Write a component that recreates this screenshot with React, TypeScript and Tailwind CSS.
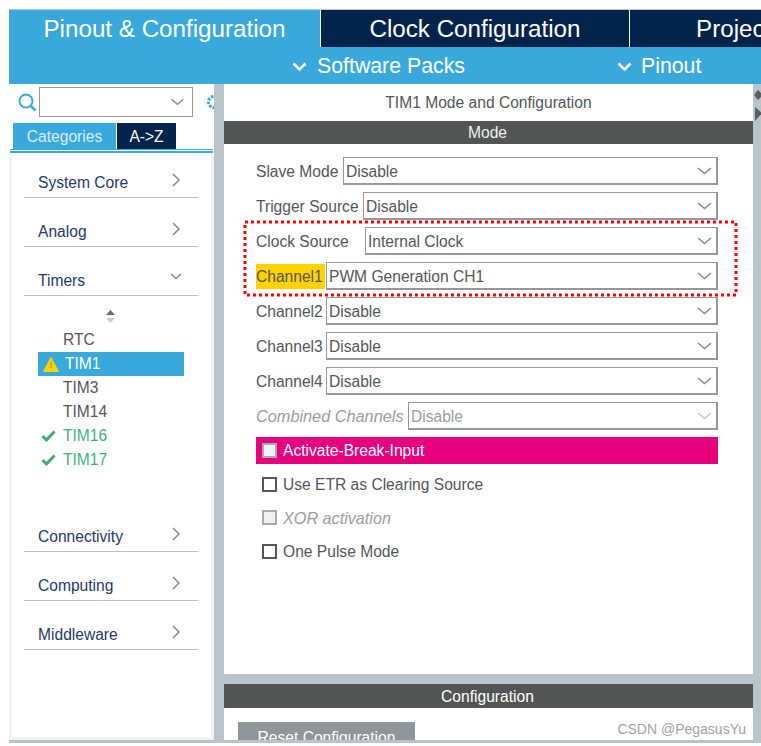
const font = "font-['Liberation_Sans',Arial,sans-serif]"

function Chevron({ className = '', light }: { className?: string; light?: boolean }) {
  return (
    <svg className={className} width="15" height="8" viewBox="0 0 15 8" fill="none">
      <path d="M1 1 L7.5 6.5 L14 1" stroke={light ? '#c2c5c7' : '#8b8e91'} strokeWidth="1.6" />
    </svg>
  )
}

function SideItem({ label, open, mt }: { label: string; open?: boolean; mt: string }) {
  return (
    <div className={`${mt} ml-[12px] mr-[13px] h-[28px] flex items-center justify-between border-b border-[#b4bfc7] pl-[14px] pr-[18px] pb-[2px] text-[15.6px] text-[#27386b]`}>
      <span>{label}</span>
      {open ? (
        <svg className="mb-[8px] -mr-[2px]" width="12" height="7" viewBox="0 0 12 7" fill="none">
          <path d="M1 1 L6 5.5 L11 1" stroke="#85888b" strokeWidth="1.5" />
        </svg>
      ) : (
        <svg className="mb-[6px]" width="8" height="14" viewBox="0 0 8 14" fill="none">
          <path d="M1 1 L7 7 L1 13" stroke="#85888b" strokeWidth="1.5" />
        </svg>
      )}
    </div>
  )
}

function Peripheral({ label, state }: { label: string; state?: 'warn' | 'ok' }) {
  const active = state === 'warn'
  return (
    <div className={`h-[24px] flex items-center text-[15.6px] ${active ? 'bg-[#39a9dc] text-white' : state === 'ok' ? 'text-[#43b07c]' : 'text-[#54565a]'}`}>
      <div className="w-[25px] flex justify-center shrink-0">
        {active && (
          <svg width="16" height="15" viewBox="0 0 16 15">
            <path d="M8 0.5 L15.5 14.5 L0.5 14.5 Z" fill="#ffd200" stroke="#ffd200" strokeLinejoin="round" />
            <rect x="7.2" y="4.5" width="1.6" height="7" fill="#c9a63a" />
          </svg>
        )}
        {state === 'ok' && (
          <svg className="mr-[5px]" width="15" height="12" viewBox="0 0 15 12" fill="none">
            <path d="M1.5 6 L5.5 10 L13.5 1.5" stroke="#3fa874" strokeWidth="3" />
          </svg>
        )}
      </div>
      <span className={active ? 'ml-[2px]' : ''}>{label}</span>
    </div>
  )
}

function Select({ value, disabled }: { value: string; disabled?: boolean }) {
  return (
    <div className={`flex-1 h-[28px] flex items-center justify-between border border-[#96999c] border-b-2 border-r-2 pl-[2px] pr-[4px] bg-white ${disabled ? 'text-[#9a9da0]' : ''}`}>
      <span className="pt-[2px]">{value}</span>
      <Chevron light={disabled} />
    </div>
  )
}

function FormRow({ label, value, width, highlight, disabled }: { label: string; value: string; width: string; highlight?: boolean; disabled?: boolean }) {
  return (
    <div className="h-[28px] flex items-center">
      <div className={`${width} shrink-0 whitespace-pre`}>
        <div className={`${highlight ? 'bg-[#ffd200] h-[25px] w-[69px] pt-[1px] flex items-center' : 'pt-[1px]'} ${disabled ? 'italic text-[16.3px] text-[#9a9da0]' : ''}`}>
          {label}
        </div>
      </div>
      <Select value={value} disabled={disabled} />
    </div>
  )
}

function Check({ label, muted, pink }: { label: string; muted?: boolean; pink?: boolean }) {
  return (
    <div className={`flex items-center pl-[6px] h-[27px] ${pink ? 'bg-[#e6007e] text-white' : ''} ${muted ? 'italic text-[16.2px] text-[#9a9da0]' : ''}`}>
      <span className={`w-[15px] h-[15px] border-2 mr-[6px] ${pink || muted ? 'border-[#a7aaad] bg-[#eef0f2]' : 'border-[#55585b] bg-white'}`} />
      <span className="pt-[1px]">{label}</span>
    </div>
  )
}

export default function App() {
  return (
    <div className={`${font} relative w-[761px] h-[746px] overflow-hidden bg-white pl-[9px] pt-[9px] flex flex-col`}>
      {/* Top tabs */}
      <div className="h-[38px] flex text-[24.2px] text-white shrink-0 border-t border-[#b8c3ca]">
        <div className="w-[311px] pt-[2px] bg-[#39a9dc] flex items-center justify-center shrink-0">Pinout &amp; Configuration</div>
        <div className="w-[308px] pt-[2px] ml-[1px] bg-[#03234b] flex items-center justify-center shrink-0">Clock Configuration</div>
        <div className="flex-1 pt-[2px] ml-[1px] bg-[#03234b] flex items-center pl-[66px] overflow-hidden whitespace-nowrap">Project Manager</div>
      </div>
      <div className="h-[37px] pt-[2px] bg-[#39a9dc] text-white text-[21.3px] flex items-center shrink-0">
        <svg className="ml-[283px] mr-[10px]" width="15" height="10" viewBox="0 0 15 10" fill="none">
          <path d="M1.5 1.5 L7.5 7.5 L13.5 1.5" stroke="white" strokeWidth="2.6" />
        </svg>
        <span>Software Packs</span>
        <svg className="ml-[152px] mr-[9px]" width="15" height="10" viewBox="0 0 15 10" fill="none">
          <path d="M1.5 1.5 L7.5 7.5 L13.5 1.5" stroke="white" strokeWidth="2.6" />
        </svg>
        <span>Pinout</span>
      </div>

      <div className="h-[656px] flex shrink-0">
        {/* Sidebar */}
        <div className="w-[205px] shrink-0 overflow-hidden flex flex-col">
          <div className="h-[33px] flex items-center pt-[3px] shrink-0">
            <svg className="ml-[9px] mr-[2px] shrink-0" width="19" height="19" viewBox="0 0 19 19" fill="none">
              <circle cx="8" cy="8" r="6.5" stroke="#39a9dc" strokeWidth="2" />
              <path d="M12.5 12.5 L17.5 17.5" stroke="#39a9dc" strokeWidth="2.5" />
            </svg>
            <div className="w-[154px] h-[30px] shrink-0 border border-[#96999c] flex items-center justify-end pr-[7px]">
              <Chevron className="scale-90" />
            </div>
            <svg className="ml-[13px] shrink-0" width="16" height="16" viewBox="0 0 16 16" fill="none">
              <circle cx="8" cy="8" r="5.5" stroke="#39a9dc" strokeWidth="3" strokeDasharray="2.5 1.2" />
            </svg>
          </div>
          <div className="h-[26px] mt-[6px] ml-[4px] flex text-[15.6px] shrink-0">
            <div className="w-[103px] pt-[1px] bg-[#39a9dc] text-[#d8eef9] flex items-center justify-center">Categories</div>
            <div className="w-[59px] pt-[1px] ml-[1px] bg-[#03234b] text-white flex items-center justify-center">A-&gt;Z</div>
          </div>
          <div className="ml-[1px] mr-[1px] border-t border-[#39a9dc] h-[5px] shrink-0">
            <div className="h-[2px] mt-[1px] bg-[#39a9dc]" />
          </div>
          <div className="flex-1 border-x-[3px] border-b-[3px] border-[#f0f1f2] flex flex-col">
            <SideItem label="System Core" mt="mt-[16px]" />
            <SideItem label="Analog" mt="mt-[21px]" />
            <SideItem label="Timers" open mt="mt-[21px]" />
            <div className="ml-[26px] mr-[27px] mt-[7px]">
              <div className="flex justify-center h-[24px] items-center pr-[2px] mt-[1px]">
                <svg width="11" height="15" viewBox="0 0 11 15">
                  <path d="M5.5 1 L10 6 L1 6 Z" fill="#6b6e71" />
                  <path d="M5.5 14 L10 9 L1 9 Z" fill="#c9cccf" />
                </svg>
              </div>
              <Peripheral label="RTC" />
              <Peripheral label="TIM1" state="warn" />
              <Peripheral label="TIM3" />
              <Peripheral label="TIM14" />
              <Peripheral label="TIM16" state="ok" />
              <Peripheral label="TIM17" state="ok" />
            </div>
            <SideItem label="Connectivity" mt="mt-[52px]" />
            <SideItem label="Computing" mt="mt-[21px]" />
            <SideItem label="Middleware" mt="mt-[21px]" />
          </div>
        </div>

        <div className="w-[10px] bg-[#b8c3ca] shrink-0" />

        {/* Main */}
        <div className="w-[529px] bg-[#b8c3ca] flex flex-col shrink-0 text-[15.6px] text-[#54565a]">
          <div className="h-[590px] bg-white flex flex-col shrink-0">
            <div className="h-[37px] flex items-center justify-center">TIM1 Mode and Configuration</div>
            <div className="h-[23px] bg-[#535554] text-[#eef1f3] flex items-center justify-center pr-[2px]">Mode</div>
            <div className="pl-[32px] pr-[35px] pt-[13px] flex flex-col gap-[7px]">
              <FormRow label="Slave Mode" value="Disable" width="w-[87px]" />
              <FormRow label="Trigger Source" value="Disable" width="w-[107px]" />
              <FormRow label="Clock Source" value="Internal Clock" width="w-[109px]" />
              <FormRow label="Channel1" value="PWM Generation CH1" width="w-[70px]" highlight />
              <FormRow label="Channel2" value="Disable" width="w-[70px]" />
              <FormRow label="Channel3" value="Disable" width="w-[70px]" />
              <FormRow label="Channel4" value="Disable" width="w-[70px]" />
              <FormRow label="Combined Channels" value="Disable" width="w-[152px]" disabled />
              <div className="flex flex-col gap-[6.5px]">
                <Check label="Activate-Break-Input" pink />
                <Check label="Use ETR as Clearing Source" />
                <Check label="XOR activation" muted />
                <Check label="One Pulse Mode" />
              </div>
            </div>
          </div>
          <div className="mt-[10px] h-[24px] bg-[#535554] text-white pt-[1px] pr-[2px] flex items-center justify-center shrink-0">Configuration</div>
          <div className="flex-1 bg-white pl-[14px] pt-[14px] relative overflow-hidden">
            <div className="w-[177px] h-[32px] bg-[#8f9599] text-white flex items-center justify-center">Reset Configuration</div>
            <span className="absolute right-[7px] top-[11px] text-[14px] text-[#a0a3a6]">CSDN @PegasusYu</span>
          </div>
        </div>

        <div className="flex-1 bg-[#b8c3ca] relative">
          <svg className="absolute left-[1px] top-[5px]" width="8" height="34" viewBox="0 0 8 34">
            <path d="M4 1 L8 5 L8 7 L4 11 L0 6 Z" fill="#5a5c5e" />
            <path d="M1 18 L8 24 L1 32 Z" fill="#5a5c5e" />
          </svg>
        </div>
      </div>
      <div className="h-[3px] bg-[#b8c3ca] shrink-0" />

      {/* Red dotted annotation */}
      <svg className="absolute left-[240px] top-[218px]" width="510" height="90" viewBox="0 0 510 90" fill="none">
        <defs>
          <filter id="annot" x="-5%" y="-20%" width="110%" height="140%">
            <feDropShadow dx="1" dy="1" stdDeviation="2.5" floodColor="#000" floodOpacity="0.5" />
          </filter>
        </defs>
        <rect x="5" y="4" width="491" height="73" stroke="#ffffff" strokeOpacity="0.01" strokeWidth="3" filter="url(#annot)" />
        <rect x="5" y="4" width="491" height="73" stroke="#ff0000" strokeWidth="3" strokeDasharray="3 3" />
      </svg>
    </div>
  )
}
